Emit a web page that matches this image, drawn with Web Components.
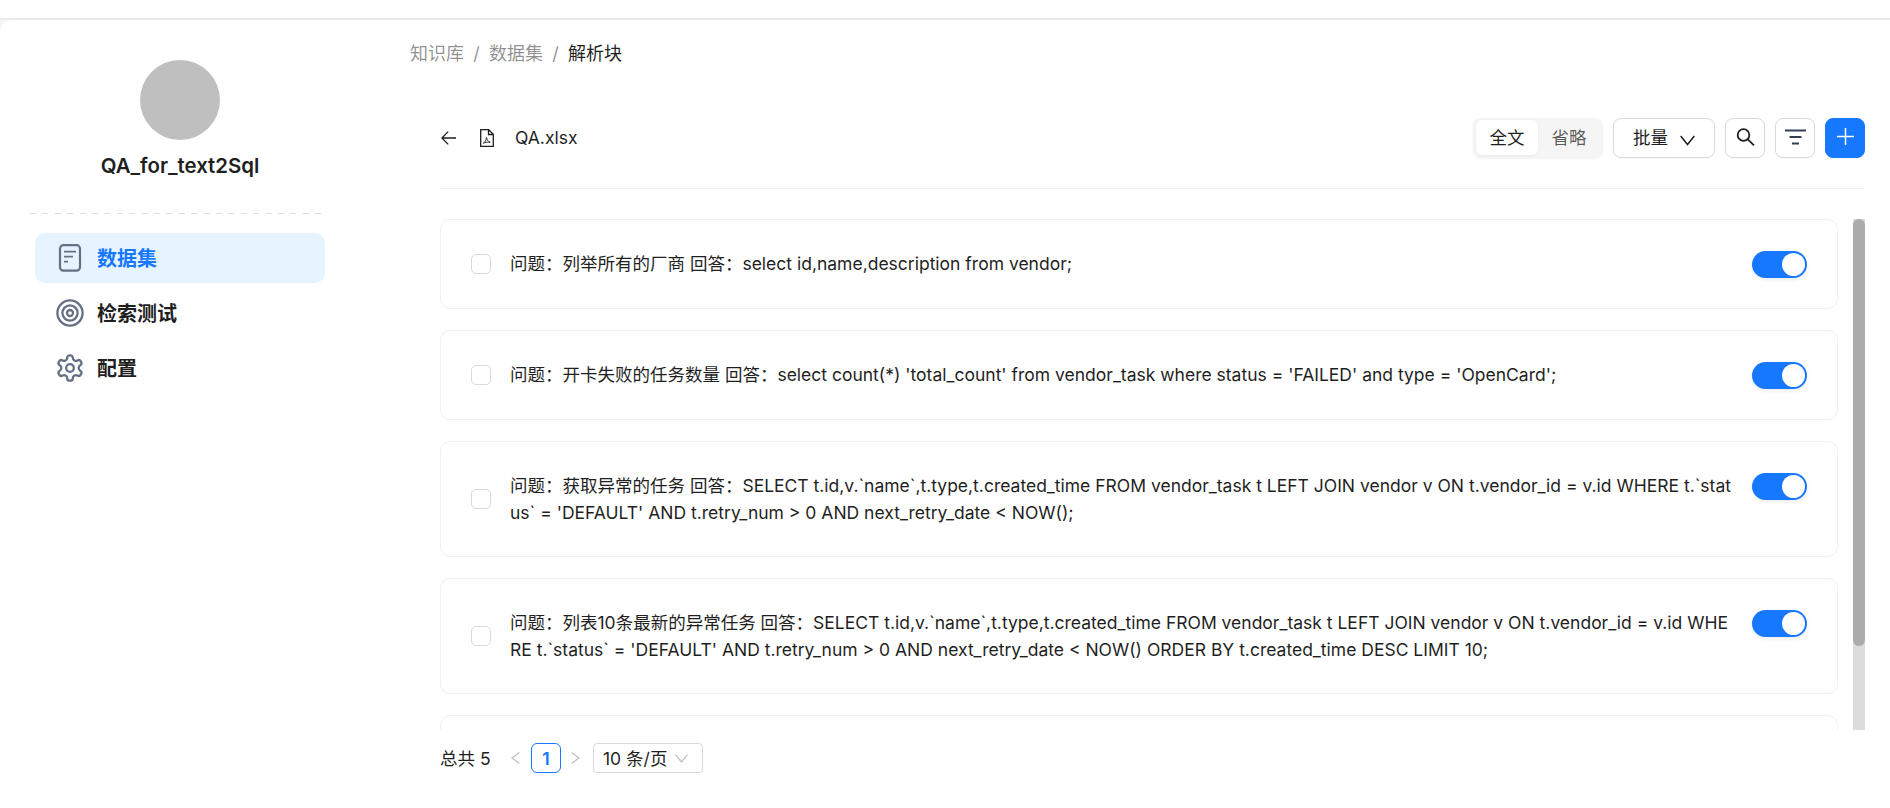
<!DOCTYPE html>
<html lang="zh"><head><meta charset="utf-8"><title>解析块</title>
<style>
html,body{margin:0;padding:0;height:808px;overflow:hidden;background:#fff}
body{font-family:Inter,"Noto Sans CJK SC",sans-serif;color:#1f1f1f;font-size:17.5px}
</style></head><body>
<app-shell>
  <side-nav slot="side" name="QA_for_text2Sql">
    <nav-item active icon="doc">数据集</nav-item>
    <nav-item icon="target">检索测试</nav-item>
    <nav-item icon="gear">配置</nav-item>
  </side-nav>
  <bread-crumbs></bread-crumbs>
  <chunk-toolbar></chunk-toolbar>
  <chunk-list>
    <chunk-card>问题：列举所有的厂商 回答：select id,name,description from vendor;</chunk-card>
    <chunk-card>问题：开卡失败的任务数量 回答：select count(*) 'total_count' from vendor_task where status = 'FAILED' and type = 'OpenCard';</chunk-card>
    <chunk-card>问题：获取异常的任务 回答：SELECT t.id,v.`name`,t.type,t.created_time FROM vendor_task t LEFT JOIN vendor v ON t.vendor_id = v.id WHERE t.`status` = 'DEFAULT' AND t.retry_num &gt; 0 AND next_retry_date &lt; NOW();</chunk-card>
    <chunk-card>问题：列表10条最新的异常任务 回答：SELECT t.id,v.`name`,t.type,t.created_time FROM vendor_task t LEFT JOIN vendor v ON t.vendor_id = v.id WHERE t.`status` = 'DEFAULT' AND t.retry_num &gt; 0 AND next_retry_date &lt; NOW() ORDER BY t.created_time DESC LIMIT 10;</chunk-card>
    <chunk-card></chunk-card>
  </chunk-list>
  <pager-bar></pager-bar>
</app-shell>
<script>
function def(name, html, init){
  const t=document.createElement('template');t.innerHTML=html;
  customElements.define(name,class extends HTMLElement{
    constructor(){super();this.attachShadow({mode:'open'}).appendChild(t.content.cloneNode(true));}
    connectedCallback(){init&&init.call(this,this.shadowRoot);}
  });
}
def('app-shell',`<style>
:host{display:block;height:808px;box-sizing:border-box;padding-top:18px}
.frame{height:790px;box-sizing:border-box;border-top:2px solid #eaeaea;background:#f6f6f6}
.inner{height:100%;background:#fff;border-top-left-radius:12px;display:flex}
.side{width:340px;flex:none}
.main{width:1490px;flex:none;padding:20px 0 0 70px;box-sizing:border-box;display:flex;flex-direction:column}
</style><div class="frame"><div class="inner"><div class="side"><slot name="side"></slot></div><div class="main"><slot></slot></div></div></div>`);
def('side-nav',`<style>
:host{display:block;padding-top:40px}
.avatar{width:80px;height:80px;border-radius:50%;background:#bfbfbf;margin:0 auto 0 140px}
.name{margin-top:16px;width:360px;text-align:center;font-size:20.4px;font-weight:600;line-height:20px;height:20px}
.dash{height:1px;margin:37px 0 19px 30px;width:294px;background:repeating-linear-gradient(90deg,#dedede 0 6px,transparent 6px 12.4px)}
nav{display:flex;flex-direction:column;gap:5px;margin-left:35px;width:290px}
</style><div class="avatar"></div><div class="name"></div><div class="dash"></div><nav><slot></slot></nav>`,function(r){r.querySelector('.name').textContent=this.getAttribute('name');});
const ICONS={
doc:`<rect x="4" y="1.200" width="20" height="25.500" rx="3.500" fill="none" stroke="#667085" stroke-width="2.200"/><path d="M8 7.700h12M8 12.700h9M8 17.700h4" stroke="#667085" stroke-width="1.800" fill="none"/>`,
target:`<circle cx="14" cy="14" r="12.600" fill="none" stroke="#667085" stroke-width="2.300"/><circle cx="14" cy="14" r="7.600" fill="none" stroke="#667085" stroke-width="2.300"/><circle cx="14" cy="14" r="3" fill="none" stroke="#667085" stroke-width="2.300"/>`,
gear:`<g transform="translate(14 14) scale(1.270) translate(-12 -12)" fill="none" stroke="#667085" stroke-width="1.800" stroke-linecap="round" stroke-linejoin="round"><path d="M12.220 2h-.44a2 2 0 0 0-2 2v.18a2 2 0 0 1-1 1.730l-.43.25a2 2 0 0 1-2 0l-.15-.08a2 2 0 0 0-2.730.73l-.22.38a2 2 0 0 0 .73 2.730l.15.1a2 2 0 0 1 1 1.720v.51a2 2 0 0 1-1 1.740l-.15.09a2 2 0 0 0-.73 2.730l.22.38a2 2 0 0 0 2.730.73l.15-.08a2 2 0 0 1 2 0l.43.25a2 2 0 0 1 1 1.730V20a2 2 0 0 0 2 2h.44a2 2 0 0 0 2-2v-.18a2 2 0 0 1 1-1.730l.43-.25a2 2 0 0 1 2 0l.15.08a2 2 0 0 0 2.730-.73l.22-.39a2 2 0 0 0-.73-2.730l-.15-.08a2 2 0 0 1-1-1.740v-.5a2 2 0 0 1 1-1.740l.15-.09a2 2 0 0 0 .73-2.730l-.22-.38a2 2 0 0 0-2.730-.73l-.15.08a2 2 0 0 1-2 0l-.43-.25a2 2 0 0 1-1-1.730V4a2 2 0 0 0-2-2z"/><circle cx="12" cy="12" r="3"/></g>`};
def('nav-item',`<style>
:host{display:flex;align-items:center;height:50px;box-sizing:border-box;padding:0 0 2px 21px;border-radius:10px;font-size:20px;font-weight:600;color:#1f1f1f}
:host([active]){background:#e6f4ff;color:#1677ff}
svg{width:28px;height:28px;margin:2px 13px 0 0;flex:none}
</style><svg viewBox="0 0 28 28"></svg><slot></slot>`,function(r){r.querySelector('svg').innerHTML=ICONS[this.getAttribute('icon')];});
def('bread-crumbs',`<style>
:host{display:flex;height:28px;align-items:center;font-size:18px;color:rgba(0,0,0,.45);line-height:28px}
i{font-style:normal;width:25px;text-align:center}
b{font-weight:400;color:#1f1f1f}
</style><span>知识库</span><i>/</i><span>数据集</span><i>/</i><b>解析块</b>`);
def('chunk-toolbar',`<style>
:host{display:flex;align-items:center;height:40px;margin:50px 0 0 30px;width:1425px}
.a{width:15px;height:14px;margin:0 24px 0 1px}
.f{width:14px;height:18px;margin-right:21px}
.name{flex:1;font-size:17.5px;padding-bottom:2px}
.seg{width:130px;height:40px;box-sizing:border-box;padding:2px 3px 3px;background:#f5f5f5;border-radius:8px;display:flex;box-shadow:0 1px 2px rgba(0,0,0,.05)}
.seg span{flex:1;display:flex;align-items:center;justify-content:center;box-sizing:border-box;padding-bottom:2px;border-radius:6px;color:rgba(0,0,0,.65);font-size:17.5px}
.seg span.on{flex:none;width:62px;background:#fff;color:#1f1f1f;box-shadow:0 1px 3px rgba(0,0,0,.06)}
.btn{height:40px;width:40px;box-sizing:border-box;border:1px solid #d9d9d9;border-radius:8px;margin-left:10px;display:flex;align-items:center;justify-content:center;background:#fff;box-shadow:0 1px 1px rgba(0,0,0,.02)}
.btn svg{margin-bottom:3px}
.batch{width:102px;font-size:17.5px;gap:12px}
.batch span{padding-bottom:3px}
.batch svg{margin:5px 0 0}
.plus{background:#1677ff;border-color:#1677ff}
</style>
<svg class="a" viewBox="0 0 15 14" fill="none" stroke="#1f1f1f" stroke-width="1.300"><path d="M.8 7h14.200M7.200.6.900 7l6.300 6.400"/></svg>
<svg class="f" viewBox="0 0 14 18" fill="none" stroke="#1f1f1f" stroke-width="1.300"><path d="M.7.700h8l4.600 4.600v12H.7zM8.500.7v4.800h4.800"/><path d="M3.400 14.200c1.700-.8 2.800-3.200 3.100-5.700.5 2.400 1.700 4.300 3.700 4.800-2.300-.4-4.700 0-6.800.9z" stroke-width=".9"/></svg>
<span class="name">QA.xlsx</span>
<div class="seg"><span class="on">全文</span><span>省略</span></div>
<div class="btn batch"><span>批量</span><svg width="15" height="11" viewBox="0 0 15 11" fill="none" stroke="#1f1f1f" stroke-width="1.500"><path d="M.7 1l6.800 8.500L14.300 1"/></svg></div>
<div class="btn"><svg width="19" height="18" viewBox="0 0 19 18" fill="none" stroke="#1f1f1f" stroke-width="1.800"><circle cx="7.500" cy="7" r="5.800"/><path d="M11.600 11.200 18 17.300"/></svg></div>
<div class="btn"><svg width="21" height="16" viewBox="0 0 21 16" fill="none" stroke="#344054" stroke-width="2"><path d="M0 1.500h21M4.500 8h12M7 14.500h7"/></svg></div>
<div class="btn plus"><svg width="17" height="17" viewBox="0 0 17 17" stroke="#fff" stroke-width="1.500"><path d="M8.500 0v17M0 8.500h17"/></svg></div>`);
def('chunk-list',`<style>
:host{display:block;width:1425px;margin:30px 0 0 30px;border-top:1px solid #f0f0f0;padding-top:30px;position:relative}
.wrap{height:511px;overflow:hidden;display:flex;flex-direction:column;gap:21px;width:1398px}
.bar{position:absolute;right:0;top:30px;width:12px;height:511px;background:#dcdcdc}
.thumb{height:427px;background:#ababab;border-radius:6px}
</style><div class="wrap"><slot></slot></div><div class="bar"><div class="thumb"></div></div>`);
def('chunk-card',`<style>
:host{display:flex;flex:none;box-sizing:border-box;border:1px solid #f0f0f0;border-radius:10px;padding:30px 25px 30px 30px;min-height:89.300px;align-items:flex-start;font-size:17.5px;line-height:27px;color:#1f1f1f}
.cb{width:20px;height:20px;box-sizing:border-box;border:1px solid #d9d9d9;border-radius:5px;margin-right:19px;flex:none;align-self:center;background:#fff}
.t{flex:1;min-width:0;word-break:break-all}
.sw{flex:none;margin:1px 5px 0 20px;width:55px;height:27px;border-radius:14px;background:#1677ff;position:relative;box-shadow:0 2px 4px rgba(0,0,0,.08)}
.sw::after{content:"";position:absolute;right:2px;top:2px;width:23px;height:23px;border-radius:50%;background:#fff}
</style><span class="cb"></span><div class="t"><slot></slot></div><span class="sw"></span>`);
def('pager-bar',`<style>
:host{display:flex;align-items:center;height:30px;margin:13px 0 0 30px;font-size:17.5px}
.total{width:50px;white-space:nowrap;padding-bottom:2px}
.c{width:9px;height:12px;flex:none}
.p{margin:0 11px 0 21px}
.n{width:30px;height:30px;box-sizing:border-box;border:1px solid #1677ff;border-radius:6px;color:#1677ff;font-weight:600;display:flex;align-items:center;justify-content:center}
.r{margin:0 13px 0 10px}
.sel{width:110px;height:30px;box-sizing:border-box;border:1px solid #d9d9d9;border-radius:4px;padding-left:9px;display:flex;align-items:center;gap:8px}
.sel span{padding-bottom:2px}
</style><span class="total">总共 5</span>
<svg class="c p" viewBox="0 0 9 12" fill="none" stroke="#bfbfbf" stroke-width="1.200"><path d="M8.400.5 1 6l7.400 5.500"/></svg>
<span class="n">1</span>
<svg class="c r" viewBox="0 0 9 12" fill="none" stroke="#bfbfbf" stroke-width="1.200"><path d="M.6.500 8 6l-7.400 5.500"/></svg>
<div class="sel"><span>10 条/页</span><svg width="13" height="9" viewBox="0 0 13 9" fill="none" stroke="#bfbfbf" stroke-width="1.200"><path d="M.5.700 6.500 8 12.500.7"/></svg></div>`);
</script></body></html>
